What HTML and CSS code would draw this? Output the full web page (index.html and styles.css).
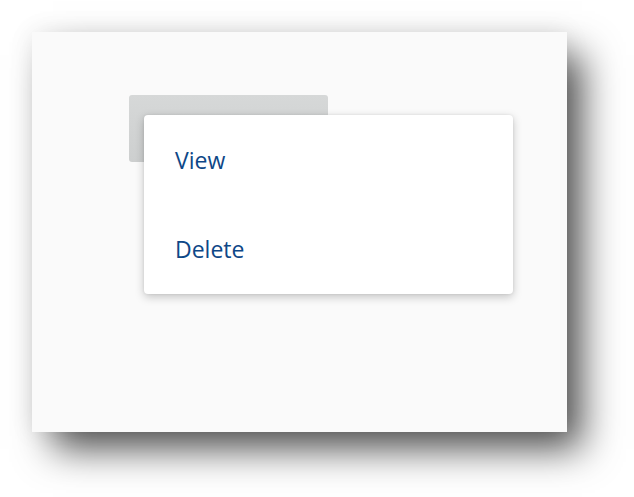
FILE: index.html
```html
<!DOCTYPE html>
<html>
<head>
<meta charset="utf-8">
<link rel="stylesheet" href="styles.css">
</head>
<body>
<div class="panel">
  <div class="anchor">
    <div class="trigger"></div>
    <div class="menu">
      <div class="item">View</div>
      <div class="item">Delete</div>
    </div>
  </div>
</div>
</body>
</html>
```
FILE: styles.css
```css
html, body {
  margin: 0;
  padding: 0;
  background: #ffffff;
}
body {
  padding: 32px 67px 65px 32px;
  font-family: "Open Sans", "Noto Sans", sans-serif;
}
.panel {
  width: 535px;
  height: 400px;
  background: #fafafa;
  box-shadow: 0 0 24px rgba(0,0,0,0.08), 18px 20px 36px -3px rgba(0,0,0,0.68);
  padding: 63px 0 0 97px;
  box-sizing: border-box;
}
.anchor {
  position: relative;
  width: 199px;
  height: 67px;
}
.trigger {
  width: 199px;
  height: 67px;
  border-radius: 3px;
  background: linear-gradient(#d6d8d8, #cdcfcf);
}
.menu {
  position: absolute;
  left: 15px;
  top: 20px;
  width: 369px;
  height: 179px;
  background: #ffffff;
  border-radius: 4px;
  box-shadow: 0 3px 10px rgba(0,0,0,0.22), 0 0 3px rgba(0,0,0,0.08);
  display: flex;
  flex-direction: column;
}
.item {
  flex: 1;
  display: flex;
  align-items: center;
  padding-left: 31px;
  font-size: 23px;
  color: #0e4787;
}
```
